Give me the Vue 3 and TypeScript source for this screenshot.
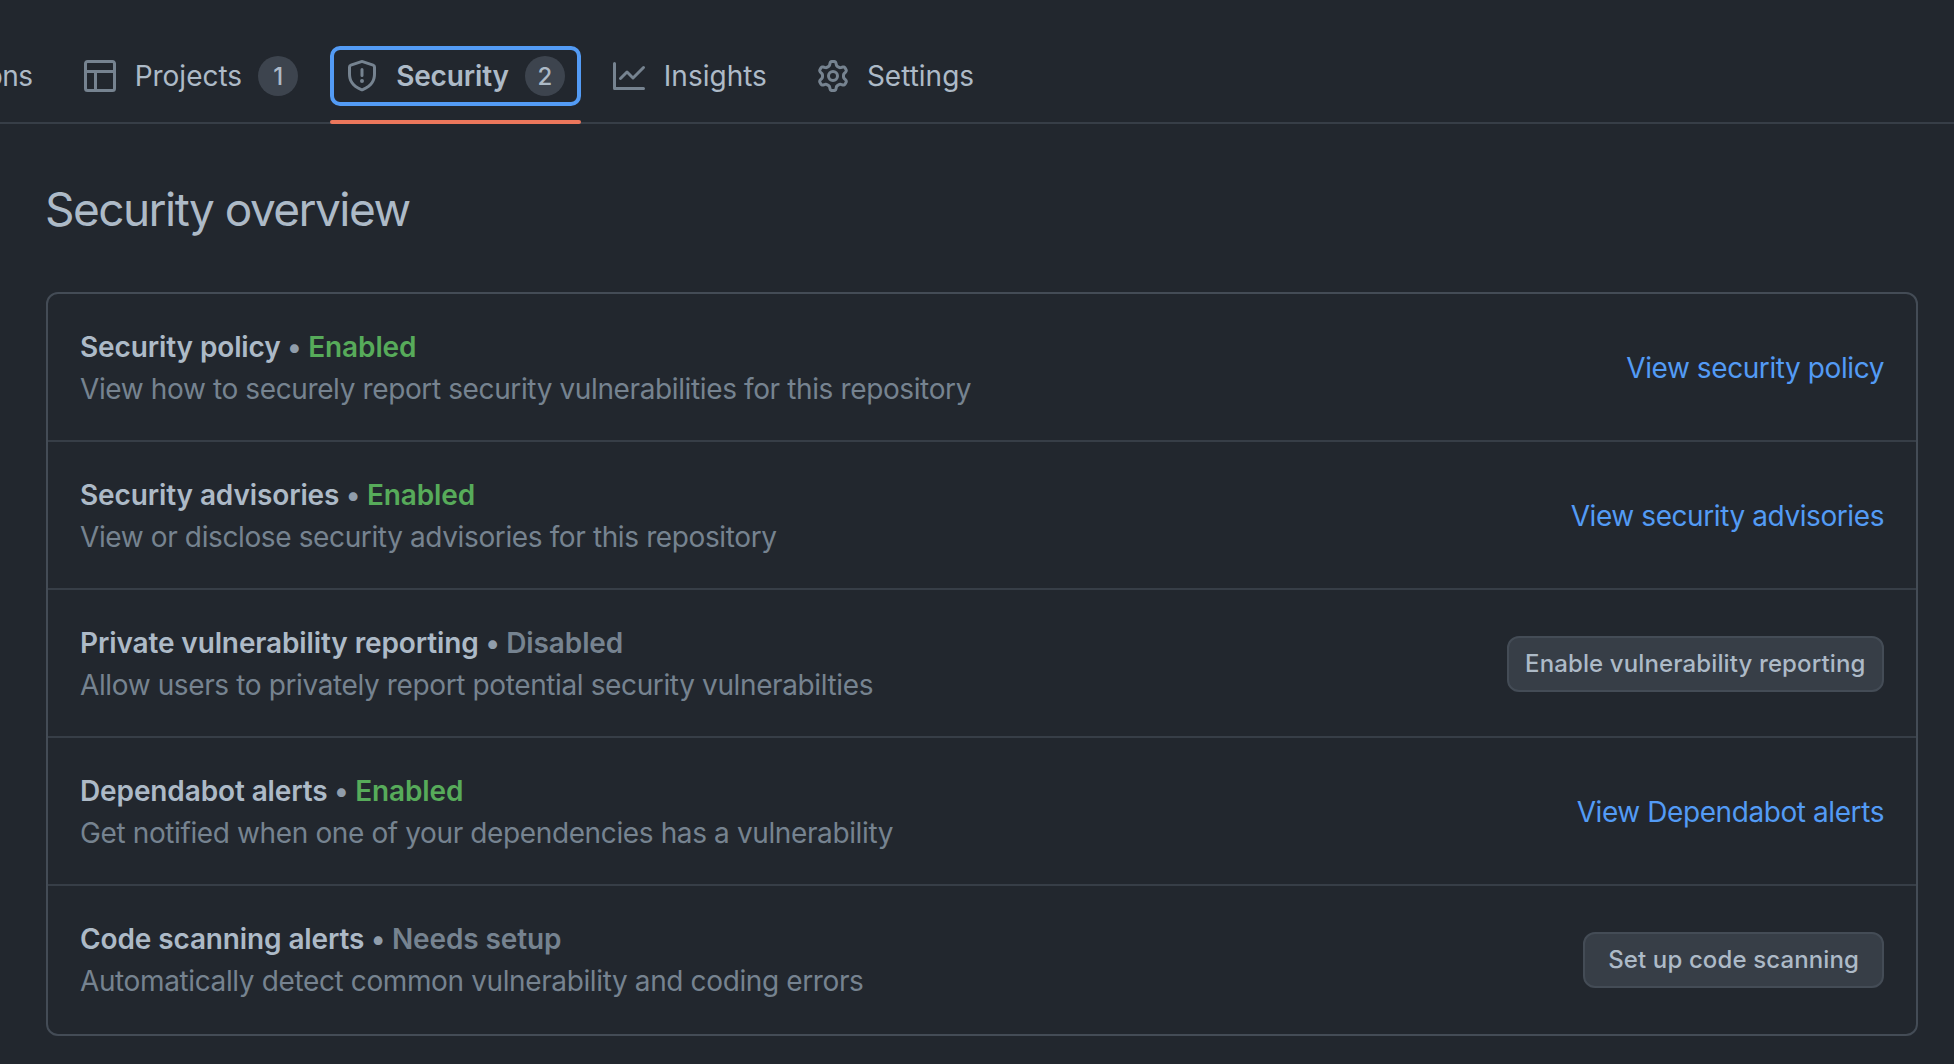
<script setup lang="ts">
interface Row {
  name: string
  status: string
  tone: 'on' | 'off'
  desc: string
  action: string
  kind: 'link' | 'button' | 'wide'
}
const rows: Row[] = [
  { name: 'Security policy', status: 'Enabled', tone: 'on', desc: 'View how to securely report security vulnerabilities for this repository', action: 'View security policy', kind: 'link' },
  { name: 'Security advisories', status: 'Enabled', tone: 'on', desc: 'View or disclose security advisories for this repository', action: 'View security advisories', kind: 'link' },
  { name: 'Private vulnerability reporting', status: 'Disabled', tone: 'off', desc: 'Allow users to privately report potential security vulnerabilties', action: 'Enable vulnerability reporting', kind: 'button' },
  { name: 'Dependabot alerts', status: 'Enabled', tone: 'on', desc: 'Get notified when one of your dependencies has a vulnerability', action: 'View Dependabot alerts', kind: 'link' },
  { name: 'Code scanning alerts', status: 'Needs setup', tone: 'off', desc: 'Automatically detect common vulnerability and coding errors', action: 'Set up code scanning', kind: 'wide' },
]
</script>

<template>
  <div class="page">
    <nav class="nav">
      <span class="tab clipped"><span class="label">ons</span></span>
      <a class="tab">
        <svg class="icon" viewBox="0 0 16 16"><path d="M0 1.75C0 .784.784 0 1.75 0h12.5C15.216 0 16 .784 16 1.75v12.5A1.75 1.75 0 0 1 14.25 16H1.75A1.75 1.75 0 0 1 0 14.25ZM6.5 6.5v8h7.75a.25.25 0 0 0 .25-.25V6.5Zm8-1.5V1.75a.25.25 0 0 0-.25-.25H1.75a.25.25 0 0 0-.25.25V5Zm-13 1.5v7.75c0 .138.112.25.25.25H5v-8Z"/></svg>
        <span class="label">Projects</span>
        <span class="count">1</span>
      </a>
      <a class="tab selected">
        <svg class="icon" viewBox="0 0 16 16"><path d="M8.533.133a1.75 1.75 0 0 0-1.066 0l-5.25 1.68A1.75 1.75 0 0 0 1 3.48V7c0 1.566.32 3.182 1.303 4.682.983 1.498 2.585 2.813 5.032 3.855a1.697 1.697 0 0 0 1.33 0c2.447-1.042 4.049-2.357 5.032-3.855C14.68 10.182 15 8.566 15 7V3.48a1.75 1.75 0 0 0-1.217-1.667Zm-.61 1.429a.25.25 0 0 1 .153 0l5.25 1.68a.25.25 0 0 1 .174.238V7c0 1.358-.275 2.666-1.057 3.86-.784 1.194-2.121 2.34-4.366 3.297a.196.196 0 0 1-.154 0c-2.245-.956-3.582-2.104-4.366-3.298C2.775 9.666 2.5 8.36 2.5 7V3.48a.25.25 0 0 1 .174-.238l5.25-1.68ZM9 10.5a1 1 0 1 1-2 0 1 1 0 0 1 2 0Zm-.25-5.75a.75.75 0 1 0-1.5 0v3a.75.75 0 0 0 1.5 0Z"/></svg>
        <span class="label">Security</span>
        <span class="count">2</span>
      </a>
      <a class="tab">
        <svg class="icon" viewBox="0 0 16 16"><path d="M1.5 1.75V13.5h13.75a.75.75 0 0 1 0 1.5H.75a.75.75 0 0 1-.75-.75V1.75a.75.75 0 0 1 1.5 0Zm14.28 2.53-5.25 5.25a.75.75 0 0 1-1.06 0L7 7.06 4.28 9.78a.751.751 0 0 1-1.042-.018.751.751 0 0 1-.018-1.042l3.25-3.25a.75.75 0 0 1 1.06 0L10 7.94l4.72-4.72a.751.751 0 0 1 1.042.018.751.751 0 0 1 .018 1.042Z"/></svg>
        <span class="label">Insights</span>
      </a>
      <a class="tab settings">
        <svg class="icon" viewBox="0 0 16 16"><path d="M8 0a8.2 8.2 0 0 1 .701.031C9.444.095 9.99.645 10.16 1.29l.288 1.107c.018.066.079.158.212.224.231.114.454.243.668.386.123.082.233.09.299.071l1.103-.303c.644-.176 1.392.021 1.82.63.27.385.506.792.704 1.218.315.675.111 1.422-.364 1.891l-.814.806c-.049.048-.098.147-.088.294.016.257.016.515 0 .772-.01.147.038.246.088.294l.814.806c.475.469.679 1.216.364 1.891a7.977 7.977 0 0 1-.704 1.217c-.428.61-1.176.807-1.82.63l-1.102-.302c-.067-.019-.177-.011-.3.071a5.909 5.909 0 0 1-.668.386c-.133.066-.194.158-.211.224l-.29 1.106c-.168.646-.715 1.196-1.458 1.26a8.006 8.006 0 0 1-1.402 0c-.743-.064-1.289-.614-1.458-1.26l-.289-1.106c-.018-.066-.079-.158-.212-.224a5.738 5.738 0 0 1-.668-.386c-.123-.082-.233-.09-.299-.071l-1.103.303c-.644.176-1.392-.021-1.82-.63a8.12 8.12 0 0 1-.704-1.218c-.315-.675-.111-1.422.363-1.891l.815-.806c.05-.048.098-.147.088-.294a6.214 6.214 0 0 1 0-.772c.01-.147-.038-.246-.088-.294l-.815-.806C.635 6.045.431 5.298.746 4.623a7.92 7.92 0 0 1 .704-1.217c.428-.61 1.176-.807 1.82-.63l1.102.302c.067.019.177.011.3-.071.214-.143.437-.272.668-.386.133-.066.194-.158.211-.224l.29-1.106C6.009.645 6.556.095 7.299.03 7.53.01 7.764 0 8 0Zm-.571 1.525c-.036.003-.108.036-.137.146l-.289 1.105c-.147.561-.549.967-.998 1.189-.173.086-.34.183-.5.29-.417.278-.97.423-1.529.27l-1.103-.303c-.109-.03-.175.016-.195.045-.22.312-.412.644-.573.99-.014.031-.021.11.059.19l.815.806c.411.406.562.957.53 1.456a4.709 4.709 0 0 0 0 .582c.032.499-.119 1.05-.53 1.456l-.815.806c-.081.08-.073.159-.059.19.162.346.353.677.573.989.02.03.085.076.195.046l1.102-.303c.56-.153 1.113-.008 1.53.27.161.107.328.204.501.29.447.222.85.629.997 1.189l.289 1.105c.029.109.101.143.137.146a6.6 6.6 0 0 0 1.142 0c.036-.003.108-.036.137-.146l.289-1.105c.147-.561.549-.967.998-1.189.173-.086.34-.183.5-.29.417-.278.97-.423 1.529-.27l1.103.303c.109.029.175-.016.195-.045.22-.313.411-.644.573-.99.014-.031.021-.11-.059-.19l-.815-.806c-.411-.406-.562-.957-.53-1.456a4.709 4.709 0 0 0 0-.582c-.032-.499.119-1.05.53-1.456l.815-.806c.081-.08.073-.159.059-.19a6.464 6.464 0 0 0-.573-.989c-.02-.03-.085-.076-.195-.046l-1.102.303c-.56.153-1.113.008-1.53-.27a4.44 4.44 0 0 0-.501-.29c-.447-.222-.85-.629-.997-1.189l-.289-1.105c-.029-.11-.101-.143-.137-.146a6.6 6.6 0 0 0-1.142 0ZM11 8a3 3 0 1 1-6 0 3 3 0 0 1 6 0ZM9.5 8a1.5 1.5 0 1 0-3.001.001A1.5 1.5 0 0 0 9.5 8Z"/></svg>
        <span class="label">Settings</span>
      </a>
    </nav>

    <main class="content">
      <h1 class="title">Security overview</h1>
      <section class="card">
        <div v-for="r in rows" :key="r.name" class="row">
          <div class="info">
            <div class="head">
              <span class="name">{{ r.name }}</span>
              <span class="dot">•</span>
              <span :class="['status', r.tone]">{{ r.status }}</span>
            </div>
            <div class="desc">{{ r.desc }}</div>
          </div>
          <a v-if="r.kind === 'link'" class="link">{{ r.action }}</a>
          <button v-else :class="['btn', r.kind]">{{ r.action }}</button>
        </div>
      </section>
    </main>
  </div>
</template>

<style>
html, body { background: #22272e; }
</style>

<style scoped>
.page {
  width: 1954px;
  height: 1064px;
  background: #22272e;
  color: #adbac7;
  font-family: Inter, "Liberation Sans", sans-serif;
  overflow: hidden;
  box-sizing: border-box;
}
.nav {
  display: flex;
  align-items: center;
  gap: 16px;
  height: 124px;
  box-sizing: border-box;
  padding: 46px 0 16px;
  border-bottom: 2px solid #373e47;
}
.tab {
  position: relative;
  display: flex;
  align-items: center;
  height: 60px;
  box-sizing: border-box;
  padding: 0 16px;
  font-size: 28px;
  color: #adbac7;
}
.clipped { padding-left: 0; margin: 0 3px 0 -14px; letter-spacing: -0.5px; }
.icon { width: 32px; height: 32px; fill: #768390; margin-right: 19px; flex: none; }
.selected { border-radius: 10px; outline: 4px solid #539bf5; outline-offset: -4px; font-weight: 600; letter-spacing: -0.15px; }
.selected .icon { margin-right: 18px; }
.settings { margin-left: 2px; }
.settings .icon { margin-right: 18px; }
.selected::after {
  content: "";
  position: absolute;
  left: 0;
  right: 0;
  bottom: -18px;
  height: 4px;
  border-radius: 2px;
  background: #ec775c;
}
.count {
  display: flex;
  align-items: center;
  justify-content: center;
  width: 40px;
  height: 40px;
  margin-left: 16px;
  border-radius: 50%;
  background: #3d444e;
  font-size: 24px;
  font-weight: 500;
}
.content { padding: 0 36px 0 46px; }
.title {
  margin: 0 0 0 -1px;
  padding: 57px 0 55px;
  font-size: 46px;
  line-height: 56px;
  letter-spacing: -1.55px;
  font-weight: 400;
  color: #adbac7;
}
.card {
  border: 2px solid #444c56;
  border-radius: 12px;
}
.row {
  display: flex;
  align-items: center;
  justify-content: space-between;
  height: 148px;
  box-sizing: border-box;
  padding: 0 32px;
  border-top: 2px solid #373e47;
}
.row:first-child { border-top: 0; height: 146px; }
.row:last-child { height: 150px; padding-bottom: 2px; }
.info { padding-top: 2px; }
.link { padding-top: 2px; }
.head { font-size: 28px; line-height: 42px; letter-spacing: -0.12px; }
.name { font-weight: 600; }
.dot { margin: 0 6px; color: #909dab; }
.status { font-weight: 600; }
.on { color: #57ab5a; }
.off { color: #768390; }
.desc { font-size: 28px; line-height: 42px; letter-spacing: -0.38px; color: #768390; }
.link { font-size: 28px; letter-spacing: -0.42px; color: #539bf5; }
.btn {
  height: 56px;
  margin-top: 1px;
  padding: 0 16.5px;
  border: 2px solid #444c56;
  border-radius: 12px;
  background: #373e47;
  color: #adbac7;
  font: 500 24px Inter, "Liberation Sans", sans-serif;
  letter-spacing: 0.12px;
}
.wide { padding: 0 23px; }
</style>
